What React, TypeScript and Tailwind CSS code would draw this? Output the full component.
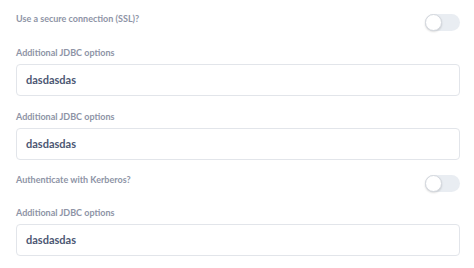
import React from 'react';

function Toggle() {
  return (
    <div className="mt-[3px] flex h-[17px] w-[35px] items-center rounded-full bg-[#e9edf2]">
      <div className="h-[17px] w-[17px] rounded-full border border-[#d4d8de] bg-white shadow-[0_1px_2px_rgba(0,0,0,0.15)]" />
    </div>
  );
}

function ToggleRow({ label }: { label: string }) {
  return (
    <div className="flex items-start justify-between">
      <span className="text-[9px] leading-4 font-bold text-[#8e94a6]">{label}</span>
      <Toggle />
    </div>
  );
}

function Field({ value }: { value: string }) {
  return (
    <div className="flex flex-col">
      <span className="text-[9px] leading-4 font-bold text-[#8e94a6]">Additional JDBC options</span>
      <div className="mt-[3px] flex h-[32px] items-center rounded-[4px] border border-[#e2e5ea] bg-white px-[9px]">
        <span className="text-[11px] font-bold text-[#4c5773]">{value}</span>
      </div>
    </div>
  );
}

export default function App() {
  return (
    <div className="h-[268px] w-[474px] bg-white pl-4 pr-[14px] pt-[11px]" style={{ fontFamily: 'Lato, "Open Sans", sans-serif' }}>
      <ToggleRow label="Use a secure connection (SSL)?" />
      <div className="mt-[14px]">
        <Field value="dasdasdas" />
      </div>
      <div className="mt-[13px]">
        <Field value="dasdasdas" />
      </div>
      <div className="mt-[12px]">
        <ToggleRow label="Authenticate with Kerberos?" />
      </div>
      <div className="mt-[13px]">
        <Field value="dasdasdas" />
      </div>
    </div>
  );
}
